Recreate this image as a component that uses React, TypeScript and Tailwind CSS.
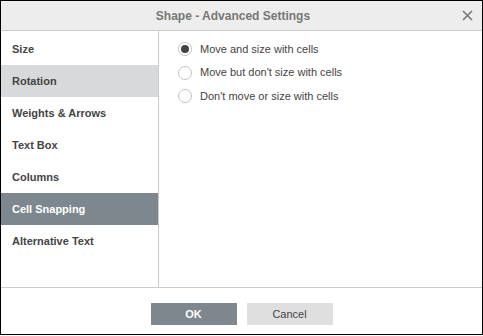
import React from 'react';

const tabs = ['Size', 'Rotation', 'Weights & Arrows', 'Text Box', 'Columns', 'Cell Snapping', 'Alternative Text'];

const options = [
  { label: 'Move and size with cells', checked: true },
  { label: "Move but don't size with cells", checked: false },
  { label: "Don't move or size with cells", checked: false },
];

export default function App() {
  return (
    <div className="w-[483px] h-[335px] border border-black bg-white flex flex-col font-['Liberation_Sans',Arial,sans-serif] text-[11px] text-[#444]">
      {/* Header */}
      <div className="relative h-[30px] shrink-0 bg-[#ededed] border-b border-[#cbcbcb] flex items-center justify-center pr-[17px]">
        <span className="text-[12px] font-bold text-[#777]">Shape - Advanced Settings</span>
        <button className="absolute right-[9px] top-[8px] w-[12px] h-[12px] flex items-center justify-center">
          <svg width="11" height="11" viewBox="0 0 11 11">
            <path d="M1 1 L10 10 M10 1 L1 10" stroke="#777" strokeWidth="1.6" fill="none" />
          </svg>
        </button>
      </div>

      {/* Body */}
      <div className="flex flex-1 min-h-0">
        <div className="w-[158px] shrink-0 border-r border-[#cbcbcb] pt-[2px]">
          {tabs.map(t => {
            const active = t === 'Cell Snapping';
            const hover = t === 'Rotation';
            return (
              <div
                key={t}
                className={
                  'h-8 px-[11px] flex items-center font-bold ' +
                  (active ? 'bg-[#7e878d] text-white' : hover ? 'bg-[#d8d9da]' : '')
                }
              >
                {t}
              </div>
            );
          })}
        </div>
        <div className="flex-1 pl-[19px] pt-[11px] flex flex-col gap-[9.5px]">
          {options.map(o => (
            <div key={o.label} className="flex items-center gap-[8px] h-[14px]">
              <span className="w-[14px] h-[14px] rounded-full border border-[#c4c4c4] bg-white flex items-center justify-center shrink-0">
                {o.checked && <span className="w-[8px] h-[8px] rounded-full bg-[#444]" />}
              </span>
              <span>{o.label}</span>
            </div>
          ))}
        </div>
      </div>

      {/* Footer */}
      <div className="h-[47px] shrink-0 border-t border-[#cbcbcb] flex justify-center gap-[10px] pt-[15px]">
        <button className="w-[86px] h-[22px] bg-[#7e878d] text-white font-bold text-[11px]">OK</button>
        <button className="w-[86px] h-[22px] bg-[#dfdfdf] text-[#444] text-[11px]">Cancel</button>
      </div>
    </div>
  );
}
